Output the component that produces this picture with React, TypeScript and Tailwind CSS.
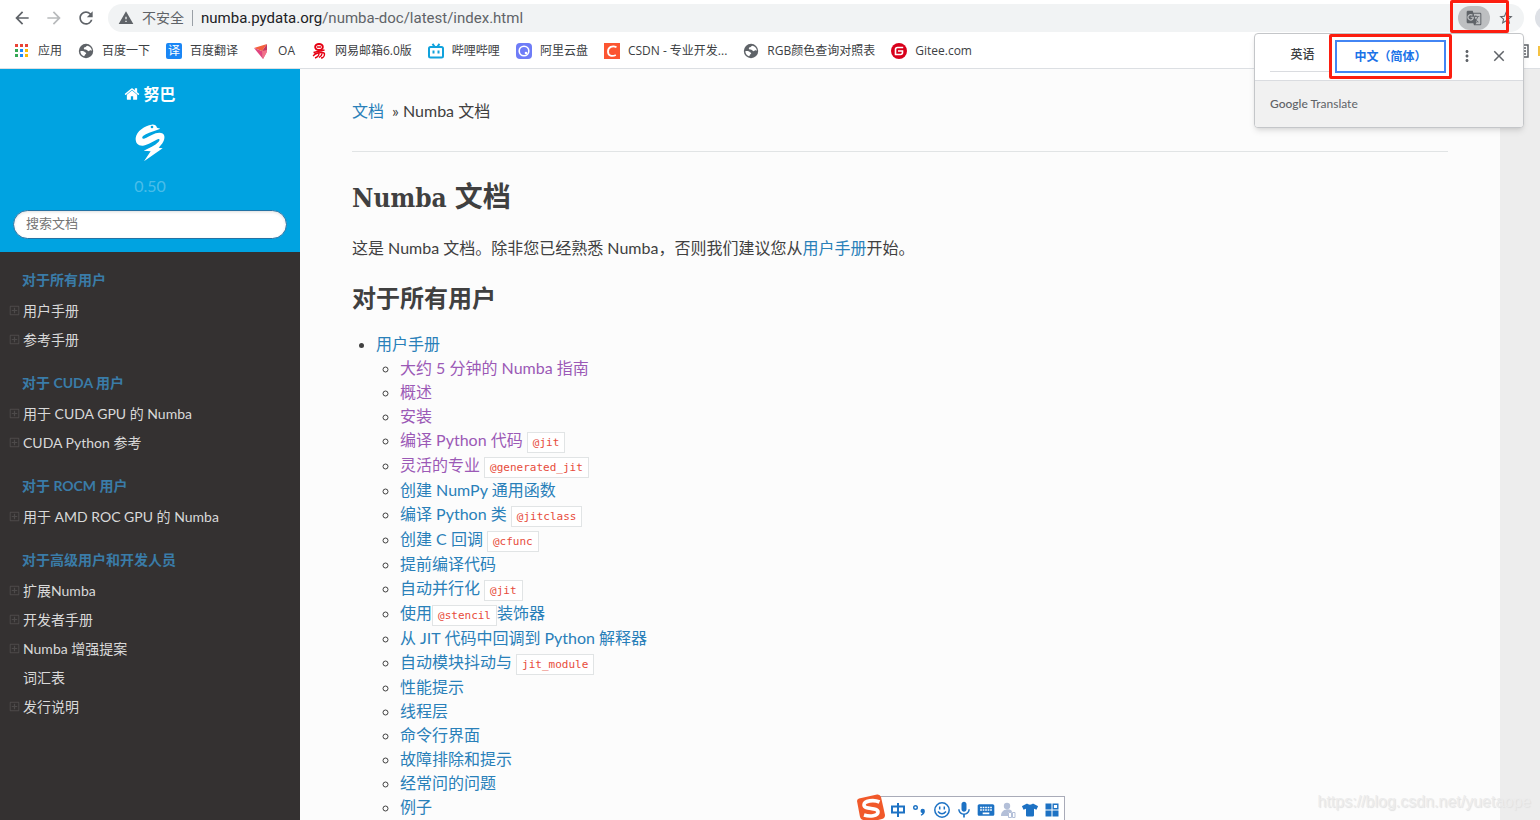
import type { ReactNode } from 'react'
import {
  MdArrowBack,
  MdArrowForward,
  MdClose,
  MdGTranslate,
  MdKeyboard,
  MdMic,
  MdMoreVert,
  MdRefresh,
  MdStarBorder,
  MdWarning,
} from 'react-icons/md'
import { FaRegPlusSquare, FaTshirt } from 'react-icons/fa'

interface Bookmark {
  label: string
  icon: ReactNode
}

interface NavGroup {
  caption: string
  items: { label: string; leaf?: boolean }[]
}

interface Entry {
  text: string
  code?: string
  tail?: string
  visited?: boolean
}

const bookmarks: Bookmark[] = [
  { label: '应用', icon: <AppsIcon /> },
  { label: '百度一下', icon: <GlobeIcon /> },
  { label: '百度翻译', icon: <FanyiIcon /> },
  { label: 'OA', icon: <OaIcon /> },
  { label: '网易邮箱6.0版', icon: <NeteaseIcon /> },
  { label: '哔哩哔哩', icon: <BiliIcon /> },
  { label: '阿里云盘', icon: <AliIcon /> },
  { label: 'CSDN - 专业开发...', icon: <CsdnIcon /> },
  { label: 'RGB颜色查询对照表', icon: <GlobeIcon /> },
  { label: 'Gitee.com', icon: <GiteeIcon /> },
]

const navGroups: NavGroup[] = [
  { caption: '对于所有用户', items: [{ label: '用户手册' }, { label: '参考手册' }] },
  { caption: '对于 CUDA 用户', items: [{ label: '用于 CUDA GPU 的 Numba' }, { label: 'CUDA Python 参考' }] },
  { caption: '对于 ROCM 用户', items: [{ label: '用于 AMD ROC GPU 的 Numba' }] },
  {
    caption: '对于高级用户和开发人员',
    items: [
      { label: '扩展Numba' },
      { label: '开发者手册' },
      { label: 'Numba 增强提案' },
      { label: '词汇表', leaf: true },
      { label: '发行说明' },
    ],
  },
]

const entries: Entry[] = [
  { text: '大约 5 分钟的 Numba 指南', visited: true },
  { text: '概述', visited: true },
  { text: '安装', visited: true },
  { text: '编译 Python 代码 ', code: '@jit', visited: true },
  { text: '灵活的专业 ', code: '@generated_jit', visited: true },
  { text: '创建 NumPy 通用函数' },
  { text: '编译 Python 类 ', code: '@jitclass' },
  { text: '创建 C 回调 ', code: '@cfunc' },
  { text: '提前编译代码' },
  { text: '自动并行化 ', code: '@jit' },
  { text: '使用', code: '@stencil', tail: '装饰器' },
  { text: '从 JIT 代码中回调到 Python 解释器' },
  { text: '自动模块抖动与 ', code: 'jit_module' },
  { text: '性能提示' },
  { text: '线程层' },
  { text: '命令行界面' },
  { text: '故障排除和提示' },
  { text: '经常问的问题' },
  { text: '例子' },
]

function AppsIcon() {
  const colors = ['#ea4335', '#ea4335', '#ea4335', '#34a853', '#1a8cff', '#fbbc05', '#34a853', '#1a8cff', '#fbbc05']
  return (
    <svg width="16" height="16" viewBox="0 0 16 16">
      {colors.map((c, i) => (
        <rect key={i} x={1 + (i % 3) * 5} y={1 + Math.floor(i / 3) * 5} width="3" height="3" fill={c} />
      ))}
    </svg>
  )
}

function GlobeIcon() {
  return (
    <svg width="16" height="16" viewBox="0 0 16 16">
      <circle cx="8" cy="8" r="7.200" fill="#5f6368" />
      <path
        d="M9.500 2.800c-1.500 0-1.200 1.300-2.500 1.500-1.500.2-1.500 1.700-.3 2.200 1 .4 2.300 0 2.800 1 .4 1 1.300.8 2 .2.800-.7 2-.4 2.300.3.200-2.500-1.500-4.600-4.300-5.200zM2.300 8.200c1.200-.4 3.700-.3 4.200.6.400.8 1.700.4 1.700 1.500 0 1-1.200.9-1.400 1.800-.1.700-.3 1.200-.8 1.200-2-.8-3.600-2.600-3.700-5.100z"
        fill="#fff"
      />
    </svg>
  )
}

function FanyiIcon() {
  return (
    <span className="flex size-4 items-center justify-center rounded-xs bg-[#1a86f5] text-xs leading-none text-white">译</span>
  )
}

function OaIcon() {
  return (
    <svg width="16" height="16" viewBox="0 0 16 16">
      <path d="M0 5 13 1 8 8z" fill="#f4603c" />
      <path d="M0 5l8 3 1 8z" fill="#e0457f" />
      <path d="M13 1v7l-4 8-1-8z" fill="#c2385f" />
      <path d="M8 8l5-1v2l-4 7z" fill="#f2728a" />
    </svg>
  )
}

function NeteaseIcon() {
  return (
    <svg width="16" height="16" viewBox="0 0 16 16" fill="none" stroke="#e60012">
      <ellipse cx="8" cy="4" rx="3.800" ry="3" strokeWidth="2" />
      <path d="M6 4h4M2.500 9.500 13.500 7M5 9c-.5 2-1.500 3-3 4M4.500 11c4-2 9-2 9 0s-1.500 4-3.500 4M8 10.500c0 2-1.500 3.500-4 4.500M11 10.500c0 2-1.500 3-3 4" strokeWidth="1.400" />
    </svg>
  )
}

function BiliIcon() {
  return (
    <svg width="16" height="16" viewBox="0 0 16 16" fill="none" stroke="#11a2dc" strokeWidth="2">
      <path d="M4.500.8 6.500 3.500M11.500.8l-2 2.700" />
      <rect x="1" y="4" width="14" height="10.500" rx="1.500" />
      <path d="M5.500 7.500v3M10.500 7.500v3" />
    </svg>
  )
}

function AliIcon() {
  return (
    <svg width="16" height="16" viewBox="0 0 16 16">
      <rect width="16" height="16" rx="4" fill="#6e7cf7" />
      <circle cx="8" cy="8" r="4.800" fill="none" stroke="#fff" strokeWidth="1.600" />
      <circle cx="10" cy="10" r="1.300" fill="#fff" />
    </svg>
  )
}

function CsdnIcon() {
  return (
    <svg width="16" height="16" viewBox="0 0 16 16">
      <path d="M0 0h16v16H0z" fill="#fc5531" />
      <path d="M12.500 4.300C8.500 2 4 4.200 4 8.500c0 4.400 4.200 5.400 7.800 3.500" fill="none" stroke="#fff" strokeWidth="1.800" />
    </svg>
  )
}

function GiteeIcon() {
  return (
    <svg width="16" height="16" viewBox="0 0 16 16">
      <circle cx="8" cy="8" r="8" fill="#d8001b" />
      <path d="M12.200 4.500H6.500a2 2 0 0 0-2 2v5h5a2 2 0 0 0 2-2V8H7" fill="none" stroke="#fff" strokeWidth="1.600" />
    </svg>
  )
}

function HomeIcon() {
  return (
    <svg width="16" height="16" viewBox="0 0 1792 1792" fill="currentColor">
      <path d="M1472 992v480q0 26-19 45t-45 19h-384v-384h-256v384h-384q-26 0-45-19t-19-45v-480q0-1 .5-3t.5-3l575-474 575 474q1 2 1 6zm223-69l-62 74q-8 9-21 11h-3q-13 0-21-7l-692-577-692 577q-12 8-24 7-13-2-21-11l-62-74q-8-10-7-23.500t11-21.500l719-599q32-26 76-26t76 26l244 204v-195q0-14 9-23t23-9h192q14 0 23 9t9 23v408l219 182q10 8 11 21.500t-7 23.500z" />
    </svg>
  )
}

function NumbaLogo() {
  return (
    <svg width="30" height="38" viewBox="0 0 90 114">
      <path
        fill="#fff"
        d="M50 2C30 4 4 22 2 42 1 58 10 66 24 65 40 63 56 50 70 45c4-1 5 3 1 8C60 65 42 72 26 80l21 2-20 30 56-39-12-2c11-11 19-23 17-35-2-10-14-12-26-8-14 5-26 14-35 16-6 1-7-4-3-8 10-8 26-12 40-17l12-5-10-3C64 4 58 1 50 2z"
      />
      <circle cx="51" cy="9" r="4" fill="#00a3e1" />
    </svg>
  )
}

function Toolbar() {
  return (
    <div className="flex h-9 items-center bg-white">
      <nav className="flex items-center gap-3 pl-3 text-[#5f6368]">
        <button aria-label="后退"><MdArrowBack size={20} /></button>
        <button aria-label="前进" className="text-[#b8babc]"><MdArrowForward size={20} /></button>
        <button aria-label="重新加载"><MdRefresh size={20} /></button>
      </nav>
      <div className="ml-3 mr-[11px] flex h-7 flex-1 items-center rounded-full bg-[#f1f3f4] pl-2.5 pr-2.5 text-[#5f6368]">
        <MdWarning size={16} />
        <span className="ml-2 text-sm">不安全</span>
        <span className="mx-2 h-4 w-px bg-[#9aa0a6]" />
        <span className="flex-1 font-[Roboto] text-[15px]">
          <span className="text-[#202124]">numba.pydata.org</span>/numba-doc/latest/index.html
        </span>
        <button aria-label="翻译此页" className="mr-2 flex h-6 w-8 items-center justify-center rounded-full bg-[#bdbfc1]">
          <MdGTranslate size={16} />
        </button>
        <button aria-label="为此网页添加书签"><MdStarBorder size={16} /></button>
      </div>
      <div className="w-[5px] overflow-hidden">
        <div className="size-6 rounded-full bg-[#dee1e6]" />
      </div>
    </div>
  )
}

function BookmarksBar() {
  return (
    <div className="flex h-[33px] items-center gap-4 overflow-hidden border-b border-[#dcdfe3] bg-white pl-[14px] pb-[3px] text-xs text-[#3c4043]">
      {bookmarks.map((b) => (
        <a key={b.label} href="#" className="flex items-center gap-2 whitespace-nowrap">
          {b.icon}
          {b.label}
        </a>
      ))}
      <div className="ml-auto flex items-center gap-2">
        <button aria-label="阅读清单">
          <svg width="16" height="16" viewBox="0 0 16 16" fill="none" stroke="#5f6368" strokeWidth="1.500">
            <path d="M2 2h12v12H2zM8 5h4M8 8h4M8 11h4" />
          </svg>
        </button>
        <span className="h-2.5 w-0.5 bg-[#f5c244]" />
      </div>
    </div>
  )
}

function TranslatePopup() {
  return (
    <div
      role="dialog"
      aria-label="翻译"
      className="absolute right-4 top-[33px] z-20 w-[270px] overflow-hidden rounded-sm border border-[#c4c6c9] bg-white text-xs shadow-md"
    >
      <div className="flex h-[46px] items-start pl-[15px] text-[#5f6368]">
        <button className="mt-1 h-[34px] w-[59px] border-b border-[#dadce0] pl-1.5 font-medium text-[#3c4043]">英语</button>
        <div className="h-[45px] w-[123px] rounded-xs border-3 border-[#fc1e10] p-[3px]">
          <button className="h-[33px] w-full border-2 border-[#4285f4] font-bold text-[#1a73e8]">中文（简体）</button>
        </div>
        <button aria-label="更多选项" className="ml-1.5 mt-[13px]"><MdMoreVert size={18} /></button>
        <button aria-label="关闭" className="ml-[14px] mt-[13px]"><MdClose size={18} /></button>
      </div>
      <div className="h-[47px] border-t border-[#dadce0] bg-[#f1f1f1] pl-[15px] font-[Lato] leading-[46px] text-[#5f6368]">
        <span className="font-medium">Google</span> Translate
      </div>
    </div>
  )
}

function Sidebar() {
  return (
    <aside className="w-[300px] shrink-0 bg-[#343131] text-sm">
      <div className="flex flex-col items-center bg-[#00a3e1] px-[13px] pb-[13px] pt-[13px] text-white">
        <a href="#" className="flex items-center gap-[3px] text-base font-bold leading-6 whitespace-nowrap">
          <HomeIcon />
          努巴
        </a>
        <div className="mt-[18px]"><NumbaLogo /></div>
        <div className="mt-3 text-base leading-6 text-white/30">0.50</div>
        <input
          type="text"
          aria-label="搜索文档"
          placeholder="搜索文档"
          className="mt-3 h-[29px] w-full rounded-full border border-[#2472a4] bg-white px-3 pb-1 text-[13px] text-[#404040] shadow-[inset_0_1px_3px_#ddd] placeholder:text-[#757575]"
        />
      </div>
      <nav className="flex flex-col gap-[13px] pt-3">
        {navGroups.map((group) => (
          <section key={group.caption}>
            <p className="pl-[22px] font-bold leading-8 text-[#3a7ca8]">{group.caption}</p>
            <ul>
              {group.items.map((item) => (
                <li key={item.label}>
                  <a href="#" className="flex h-[29px] items-center pl-[9px] text-[#d9d9d9]">
                    <span className="w-[14px]">{!item.leaf && <FaRegPlusSquare size={11} className="text-[#4d4a4a]" />}</span>
                    {item.label}
                  </a>
                </li>
              ))}
            </ul>
          </section>
        ))}
      </nav>
    </aside>
  )
}

function DocEntry({ entry }: { entry: Entry }) {
  return (
    <li className={entry.code ? 'h-[25px]' : 'h-6'}>
      <a href="#" className={entry.visited ? 'text-[#9b59b6]' : 'text-[#2980b9]'}>
        {entry.text}
        {entry.code && (
          <code className="border border-[#e1e4e5] bg-white px-[5px] py-[3px] font-['DejaVu_Sans_Mono',monospace] text-[11px] leading-none text-[#e74c3c]">
            {entry.code}
          </code>
        )}
        {entry.tail}
      </a>
    </li>
  )
}

function Doc() {
  return (
    <main className="min-w-0 max-w-[1200px] flex-1 bg-[#fcfcfc] px-[52px] pt-[30px] text-base leading-6 text-[#404040]">
      <div className="border-b border-[#e1e4e5] pb-7">
        <a href="#" className="mr-2 text-[#2980b9]">文档</a>» Numba 文档
      </div>
      <h1 className="mt-[26px] font-['DejaVu_Serif_Condensed','Noto_Sans_CJK_SC',serif] text-[28px] font-bold leading-10">
        <span className="text-[26px]">Numba </span>文档
      </h1>
      <p className="mt-[18px]">
        这是 Numba 文档。除非您已经熟悉 Numba，否则我们建议您从<a href="#" className="text-[#2980b9]">用户手册</a>开始。
      </p>
      <h2 className="mt-5 text-2xl font-bold leading-9">对于所有用户</h2>
      <ul className="ml-6 mt-4 list-disc">
        <li>
          <a href="#" className="text-[#2980b9]">用户手册</a>
          <ul className="ml-6 list-[circle]">
            {entries.map((entry) => (
              <DocEntry key={entry.text + (entry.code ?? '')} entry={entry} />
            ))}
          </ul>
        </li>
      </ul>
    </main>
  )
}

// Sogou input method bar floating over the bottom edge
function ImeBar() {
  return (
    <div className="absolute bottom-0 left-[857px] z-10 flex items-end text-[#1d72c4]">
      <svg width="28" height="26" viewBox="0 0 28 26" className="z-10 -mr-2">
        <path d="M0 7Q0 5 2 4.500L20 .5q3-.5 4 2.500l4 18q0 3-3 4l-4 1H6Q4 26 3 23z" fill="#f1592a" />
        <path d="M22.500 8C17 5.500 7 6.500 7 11c0 5 14 2 14 7 0 4-8 5-14 3" fill="none" stroke="#fff" strokeWidth="3.600" />
      </svg>
      <div className="flex h-6 items-center gap-[6px] border border-b-0 border-[#a9abb8] bg-white pl-3 pr-1 pt-0.5">
        <svg width="16" height="16" viewBox="0 0 16 16" fill="none" stroke="currentColor" strokeWidth="2">
          <path d="M2 4.500h12v6H2zM8 1v14" />
        </svg>
        <svg width="16" height="16" viewBox="0 0 16 16" fill="currentColor">
          <circle cx="3.500" cy="5.500" r="1.800" fill="none" stroke="currentColor" strokeWidth="1.400" />
          <path d="M8.500 9a2.200 2.200 0 1 1 4.400 0c0 2.500-1.500 4.200-3.700 4.700l-.5-1c1-.5 1.600-1 1.600-1.700A2 2 0 0 1 8.500 9z" />
        </svg>
        <svg width="16" height="16" viewBox="0 0 16 16" fill="none" stroke="currentColor" strokeWidth="1.500">
          <circle cx="8" cy="8" r="7.200" />
          <path d="M5.700 4.500v3M10.300 4.500v3M4 9.500q4 4.500 8 0" />
        </svg>
        <MdMic size={20} className="-mx-0.5" />
        <MdKeyboard size={20} className="-mx-0.5" />
        <svg width="16" height="16" viewBox="0 0 16 16" fill="#b3bfd8">
          <circle cx="7" cy="4" r="3.200" />
          <path d="M1 14c0-8 11-8 11-4H8v4z" />
          <path d="M8.500 10.500h3v5h-3zM12.500 10.500h2.500v5h-2.500z" fill="#fff" stroke="#b3bfd8" />
        </svg>
        <FaTshirt size={16} />
        <svg width="16" height="16" viewBox="0 0 16 16" fill="currentColor">
          <path d="M1.500 1.500h6v6h-6zM1.500 8.500h6v6h-6zM8.500 8.500h6v6h-6z" />
          <path d="M9.200 2.200h4.600v4.600H9.200z" fill="none" stroke="currentColor" strokeWidth="1.400" />
        </svg>
      </div>
    </div>
  )
}

export default function App() {
  return (
    <div className="relative flex h-screen flex-col overflow-hidden bg-[#ededed] font-['Open_Sans','Noto_Sans_CJK_SC',sans-serif]">
      <Toolbar />
      <BookmarksBar />
      <div className="flex min-h-0 flex-1 font-[Lato,'Noto_Sans_CJK_SC',sans-serif]">
        <Sidebar />
        <Doc />
      </div>
      <TranslatePopup />
      <div className="pointer-events-none absolute right-[31px] top-0 z-30 h-[33px] w-[59px] rounded-xs border-3 border-[#fc1e10]" />
      <ImeBar />
      <div className="pointer-events-none absolute bottom-1.5 right-[9px] font-['Liberation_Sans',sans-serif] text-base text-[#ececec] [text-shadow:1px_1px_1px_#e0e0e0]">
        https://blog.csdn.net/yuetaope
      </div>
    </div>
  )
}
